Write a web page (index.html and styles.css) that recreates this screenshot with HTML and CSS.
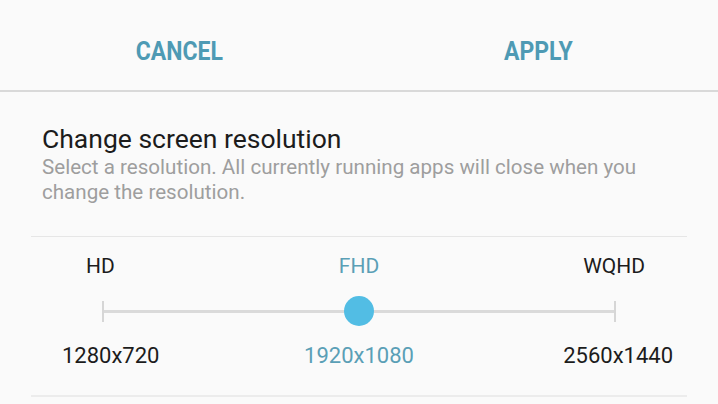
FILE: index.html
```html
<!DOCTYPE html>
<html>
<head>
<meta charset="utf-8">
<link rel="stylesheet" href="styles.css">
</head>
<body>
<div class="screen">
  <div class="actions">
    <div class="btn"><span class="btn-label">CANCEL</span></div>
    <div class="btn"><span class="btn-label">APPLY</span></div>
  </div>
  <div class="content">
    <div class="title">Change screen resolution</div>
    <div class="desc">Select a resolution. All currently running apps will close when you change the resolution.</div>
    <div class="picker">
      <div class="labels names">
        <span class="first">HD</span>
        <span class="mid active">FHD</span>
        <span class="last">WQHD</span>
      </div>
      <div class="slider">
        <div class="tick"></div>
        <div class="track"></div>
        <div class="tick"></div>
        <div class="thumb"></div>
      </div>
      <div class="labels values">
        <span class="first">1280x720</span>
        <span class="mid active">1920x1080</span>
        <span class="last">2560x1440</span>
      </div>
    </div>
  </div>
</div>
</body>
</html>
```
FILE: styles.css
```css
html, body {
  margin: 0;
  padding: 0;
  background: #fafafa;
}
.screen {
  width: 718px;
  height: 404px;
  overflow: hidden;
  font-family: Roboto, "Liberation Sans", sans-serif;
}
.actions {
  display: flex;
  height: 90px;
  border-bottom: 2px solid #d9d9d9;
  box-sizing: content-box;
}
.btn {
  flex: 1;
  display: flex;
  align-items: center;
  justify-content: center;
  padding-top: 12px;
}
.btn-label {
  display: inline-block;
  color: #4e9ab4;
  font-weight: 700;
  font-size: 25px;
  transform: scaleX(0.92);
}
.content {
  padding: 31px 31px 0 31px;
}
.title {
  padding-left: 11px;
  font-size: 26.5px;
  line-height: 32px;
  color: #1c1c1c;
}
.desc {
  padding-left: 11px;
  width: 620px;
  font-size: 20.6px;
  line-height: 25px;
  color: #9e9e9e;
  padding-bottom: 31px;
}
.picker {
  border-top: 1px solid #e6e6e6;
  border-bottom: 2px solid #ececec;
  padding-bottom: 25px;
}
.labels {
  display: grid;
  grid-template-columns: 1fr 1fr 1fr;
  line-height: 28px;
  color: #1c1c1c;
}
.labels .first { text-align: left; }
.labels .mid { text-align: center; }
.labels .last { text-align: right; }
.labels .active {
  color: #5a9fb6;
}
.names {
  margin-top: 15px;
  font-size: 21px;
}
.names .first { padding-left: 55px; }
.names .last { padding-right: 42px; }
.values {
  margin-top: 16px;
  font-size: 22px;
}
.values .first { padding-left: 31px; }
.values .last { padding-right: 14px; }
.slider {
  position: relative;
  display: flex;
  align-items: center;
  margin: 16px 71px 0 71px;
  height: 30px;
}
.track {
  flex: 1;
  height: 3px;
  background: #dadada;
}
.tick {
  width: 2px;
  height: 21px;
  background: #d6d6d6;
}
.thumb {
  position: absolute;
  left: 242px;
  top: 0;
  width: 30px;
  height: 30px;
  border-radius: 50%;
  background: #52bde4;
}
```
